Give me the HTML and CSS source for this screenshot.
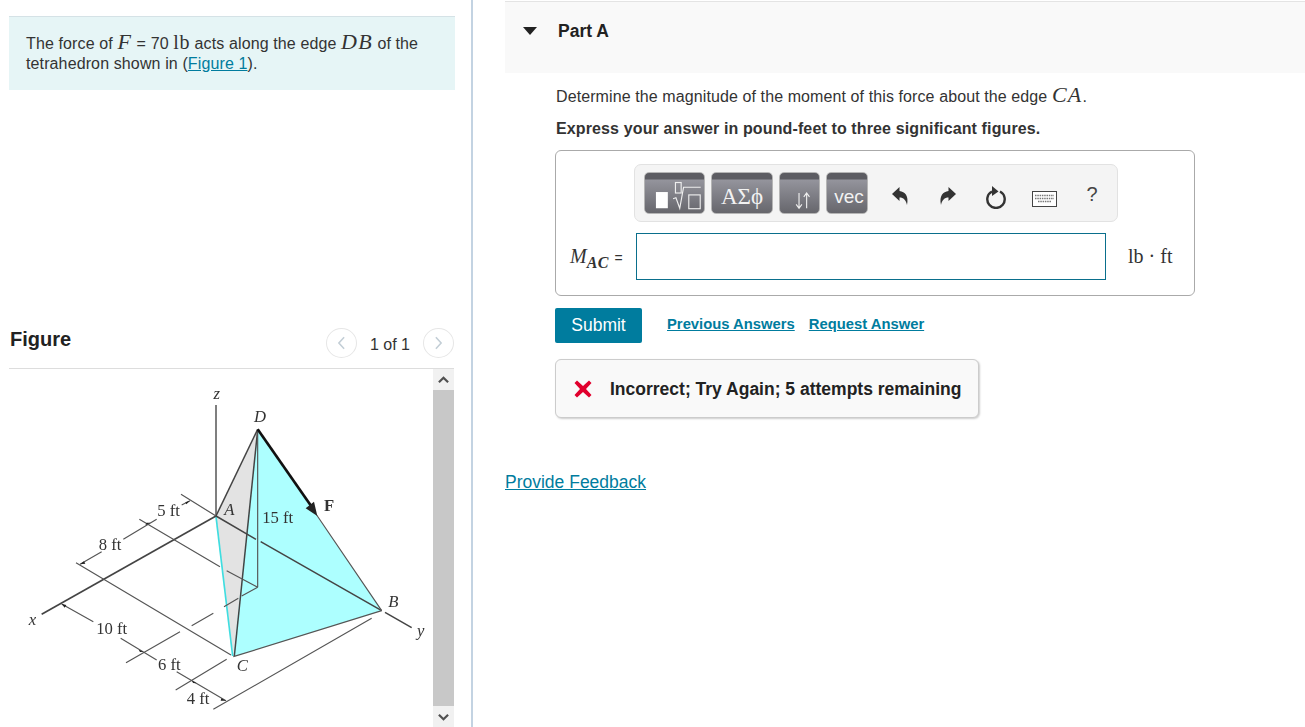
FILE: index.html
```html
<!DOCTYPE html>
<html lang="en">
<head>
<meta charset="utf-8">
<title>Part A</title>
<link rel="stylesheet" href="styles.css">
</head>
<body>
<div class="page">
  <aside class="left">
    <div class="intro">The force of <span class="m">F</span> = 70 <span class="mr">lb</span> acts along the edge <span class="m">DB</span> of the tetrahedron shown in (<a href="#" class="link">Figure 1</a>).</div>
    <div class="fig-head">
      <h2 class="fig-title">Figure</h2>
      <div class="pager">
        <span class="round"><svg viewBox="0 0 10 16" class="chev"><path d="M8 1.500 L2 8 L8 14.500"/></svg></span>
        <span class="count">1 of 1</span>
        <span class="round"><svg viewBox="0 0 10 16" class="chev"><path d="M2 1.500 L8 8 L2 14.500"/></svg></span>
      </div>
    </div>
    <div class="fig-pane">
      <svg class="diagram" viewBox="27 -33 1272 1074">
        <polygon class="f-grey" points="648,408 773,148 700,830"/>
        <polygon class="f-cyan" points="773,148 1145,692 700,830"/>
        <line class="l-cyan" x1="648" y1="410" x2="698" y2="828"/>
        <line class="l-z" x1="648" y1="75" x2="648" y2="408"/>
        <line class="l-mid" x1="648" y1="408" x2="773" y2="148"/>
        <line class="l-mid" x1="773" y1="150" x2="703" y2="828"/>
        <line class="l-th" x1="773" y1="150" x2="773" y2="622"/>
        <line class="l-heavy" x1="125" y1="703" x2="648" y2="408"/>
        <path class="l-mid" d="M648 408 L768 478 M782 485 L1145 692 M1155 697 L1235 743"/>
        <path class="l-th" d="M543 343 L648 408 M418 418 L660 560 M680 572 L773 622 M228 548 L693 825"/>
        <path class="l-th" d="M773 622 L725 648 M715 655 L672 680 M640 700 L575 737 M540 755 L378 848 M680 838 L527 930 M1115 715 L640 988"/>
        <path class="l-th" d="M185 672 L280 725 M362 775 L470 840 M530 875 L678 962 M240 553 L305 515 M370 478 L470 418 M545 375 L570 362"/>
        <path class="l-th" d="M950 405 L1145 692 M700 830 L1145 692"/>
        <path class="l-arrow" d="M773 148 L935 380"/>
        <path class="a-fill" d="M952 408 L917 385 L942 365 Z M185 672 L199 675 L194 683 Z M240 553 L252 544 L256 551 Z M452 428 L436 436 L440 428 Z M570 362 L556 367 L559 373 Z M430 815 L416 809 L420 816 Z M590 910 L576 902 L579 909 Z M678 962 L664 955 L662 962 Z"/>
        <text class="t i" x="780" y="126" text-anchor="middle">D</text>
        <text class="t i" x="650" y="58" text-anchor="middle">z</text>
        <text class="t i" x="688" y="405" text-anchor="middle">A</text>
        <text class="t b" x="987" y="394" text-anchor="middle">F</text>
        <text class="t" x="833" y="430" text-anchor="middle">15 ft</text>
        <text class="t" x="506" y="409" text-anchor="middle">5 ft</text>
        <text class="t" x="330" y="509" text-anchor="middle">8 ft</text>
        <text class="t i" x="97" y="736" text-anchor="middle">x</text>
        <text class="t" x="335" y="763" text-anchor="middle">10 ft</text>
        <text class="t" x="508" y="870" text-anchor="middle">6 ft</text>
        <text class="t" x="594" y="972" text-anchor="middle">4 ft</text>
        <text class="t i" x="727" y="872" text-anchor="middle">C</text>
        <text class="t i" x="1180" y="680" text-anchor="middle">B</text>
        <text class="t i" x="1262" y="769" text-anchor="middle">y</text>
      </svg>
      <div class="scrollbar">
        <span class="sb-btn"><svg viewBox="0 0 12 8" class="sb-chev"><path d="M1 6.500 L6 1.500 L11 6.500"/></svg></span>
        <span class="sb-thumb"></span>
        <span class="sb-btn"><svg viewBox="0 0 12 8" class="sb-chev"><path d="M1 1.500 L6 6.500 L11 1.500"/></svg></span>
      </div>
    </div>
  </aside>
  <main class="right">
    <div class="part-head">
      <svg class="caret" viewBox="0 0 14 8"><path d="M0 0 H14 L7 8 Z"/></svg>
      <h2 class="part-title">Part A</h2>
    </div>
    <div class="part-body">
      <p class="q">Determine the magnitude of the moment of this force about the edge <span class="m">CA</span>.</p>
      <p class="q-b">Express your answer in pound-feet to three significant figures.</p>
      <div class="answer">
        <div class="toolbar">
          <span class="tbtn w1"><svg class="tplate" viewBox="0 0 61 42">
            <rect class="s-fill" x="11" y="20" width="12.500" height="17"/>
            <rect class="s-line" x="31.500" y="10" width="6" height="11"/>
            <path class="s-line" d="M29 27 L32 26 L36 37 L40 15 H58"/>
            <rect class="s-line" x="45.500" y="23" width="12" height="14.500"/>
          </svg></span>
          <span class="tbtn w2"><span class="greek">ΑΣϕ</span></span>
          <span class="tbtn w3"><svg class="tplate" viewBox="0 0 41 42"><path class="s-line" d="M20 21 V37 M17 33 L20 37 L23 33 M28 37 V21 M25 25 L28 21 L31 25"/></svg></span>
          <span class="tbtn w4"><span class="vec">vec</span></span>
          <span class="tool tool-first"><svg class="ico ico-up" viewBox="0 0 18 20"><path d="M1 8 L8.500 1 V5 C14 5.500 18 10 16 19 C15 14 12.500 11.500 8.500 11.500 V15 Z"/></svg></span>
          <span class="tool"><svg class="ico ico-up" viewBox="0 0 18 20"><path d="M17 8 L9.500 1 V5 C4 5.500 0 10 2 19 C3 14 5.500 11.500 9.500 11.500 V15 Z"/></svg></span>
          <span class="tool"><svg class="reload" viewBox="0 0 22 24"><path class="ico-ring" d="M7 6.500 A8.700 8.700 0 1 0 15 6.500"/><path d="M7 1 L13.500 6.500 L7 11 Z"/></svg></span>
          <span class="tool"><svg class="kbd" viewBox="0 0 25 16"><rect x="0.500" y="0.500" width="24" height="15" class="k-frame"/><path class="k-keys" d="M3 4.500 H22 M3 7.500 H22 M6 10.500 H19" /></svg></span>
          <span class="tool help">?</span>
        </div>
        <div class="ans-row">
          <label class="ans-label"><span class="mm">M<sub>AC</sub></span> =</label>
          <input class="ans-input" type="text" aria-label="answer">
          <span class="unit">lb · ft</span>
        </div>
      </div>
      <div class="actions">
        <button class="submit" type="button">Submit</button>
        <a href="#" class="alink first">Previous Answers</a>
        <a href="#" class="alink">Request Answer</a>
      </div>
      <div class="feedback">
        <svg class="xmark" viewBox="0 0 18 18"><path d="M3 0.500 L9 6 L15 0.500 L17.500 3 L12 9 L17.500 15 L15 17.500 L9 12 L3 17.500 L0.500 15 L6 9 L0.500 3 Z"/></svg>
        <span>Incorrect; Try Again; 5 attempts remaining</span>
      </div>
    </div>
    <a href="#" class="provide">Provide Feedback</a>
  </main>
</div>
</body>
</html>
```
FILE: styles.css
```css
* { box-sizing: border-box; }
html, body { margin: 0; padding: 0; height: 100%; overflow: hidden; background: #fff; }
body { font-family: "Liberation Sans", Arial, sans-serif; font-size: 16px; color: #333; }
.page { display: flex; width: 1305px; height: 727px; }

.left { width: 473px; flex: none; padding: 16px 16px 0 9px; border-right: 2px solid #c3d3e2; display: flex; flex-direction: column; }
.intro { background: #e6f5f6; border-top: 1px solid #d5e2e6; height: 74px; padding: 14px 17px 0; line-height: 20px; color: #333; letter-spacing: .12px; }
.link { color: #007c9e; text-decoration: underline; }
.m { font-family: "Liberation Serif", serif; font-style: italic; font-size: 22px; line-height: 1; letter-spacing: 1.200px; color: #333; }
.mr { font-family: "Liberation Serif", serif; font-size: 20px; line-height: 1; letter-spacing: .6px; }

.fig-head { margin-top: 229px; height: 50px; border-bottom: 1px solid #ddd; display: flex; justify-content: space-between; align-items: flex-start; margin-right: 1px; }
.fig-title { margin: 8px 0 0 1px; font-size: 20px; line-height: 24px; font-weight: 700; color: #222; }
.pager { display: flex; align-items: center; margin-top: 9px; margin-right: 0; }
.round { width: 31px; height: 30px; border: 1px solid #e6e6e6; border-radius: 50%; display: flex; align-items: center; justify-content: center; }
.chev { width: 9px; height: 14px; fill: none; stroke: #c3ced6; stroke-width: 1.800; }
.count { width: 66px; text-align: center; font-size: 16px; margin-top: 4px; }

.fig-pane { display: flex; flex: 1; min-height: 0; }
.diagram { width: 424px; height: 358px; flex: none; display: block; filter: blur(0.45px); }
.f-grey { fill: #e3e3e3; }
.f-cyan { fill: #adffff; }
.l-cyan { stroke: #3fdde0; stroke-width: 5; }
.l-z { stroke: #666; stroke-width: 5; fill: none; }
.l-mid { stroke: #444; stroke-width: 4.500; fill: none; }
.l-th { stroke: #555; stroke-width: 3.500; fill: none; }
.l-heavy { stroke: #444; stroke-width: 5; }
.l-arrow { stroke: #111; stroke-width: 8; fill: none; }
.a-fill { fill: #222; }
.t { font-family: "Liberation Serif", serif; font-size: 50px; fill: #333; }
.t.i { font-style: italic; }
.t.b { font-weight: 700; }

.scrollbar { width: 21px; flex: none; display: flex; flex-direction: column; height: 358px; }
.sb-btn { height: 21px; background: #f1f1f1; display: flex; align-items: center; justify-content: center; flex: none; }
.sb-thumb { flex: 1; background: #c8c8c8; }
.sb-chev { width: 11px; height: 8px; fill: none; stroke: #505050; stroke-width: 2.400; }

.right { flex: 1; padding-left: 32px; min-width: 0; }
.part-head { margin-top: 1px; height: 72px; background: #f9f9f9; border-top: 1px solid #e4e4e4; display: flex; align-items: flex-start; padding: 0 0 0 18px; }
.caret { width: 14px; height: 8px; margin-top: 25px; fill: #222; flex: none; }
.part-title { margin: 19px 0 0 21px; font-size: 17.500px; line-height: 20px; font-weight: 700; color: #222; }
.part-body { padding-left: 50px; }
.q { margin: 11px 0 0 1px; line-height: 20px; height: 20px; color: #333; letter-spacing: .1px; }
.q-b { margin: 15px 0 0 1px; line-height: 20px; font-weight: 700; color: #333; letter-spacing: .125px; }

.answer { margin-top: 11px; width: 640px; height: 146px; border: 1px solid #aaa; border-radius: 6px; padding: 13px 0 0; }
.toolbar { margin-left: 78px; width: 484px; height: 58px; background: #f4f4f4; border: 1px solid #e2e2e2; border-radius: 7px; display: flex; align-items: center; padding-left: 9px; gap: 6px; }
.tbtn { height: 42px; flex: none; border: 1px solid #b5b5b5; border-radius: 5px; background: linear-gradient(#5c5c62 0, #5c5c62 6px, #94949c 7px, #66666c 100%); display: flex; align-items: center; justify-content: center; overflow: hidden; color: #f2f2f2; }
.w1 { width: 61px; } .w2 { width: 62px; } .w3 { width: 41px; } .w4 { width: 42px; }
.tplate { width: 100%; height: 100%; display: block; }
.s-fill { fill: #fff; }
.s-line { fill: none; stroke: #eee; stroke-width: 1.200; }
.greek { font-family: "Liberation Serif", serif; font-size: 23px; margin-top: 7px; }
.vec { font-size: 19px; margin-top: 8px; margin-left: 4px; }
.tool { width: 48px; margin-left: -6px; display: flex; align-items: center; justify-content: center; flex: none; }
.tool-first { margin-left: 2px; }
.ico { width: 18px; height: 20px; fill: #333; }
.ico-up { margin-top: 5px; }
.reload { width: 22px; height: 24px; margin-top: 8px; fill: #333; }
.ico-ring { fill: none; stroke: #333; stroke-width: 2.400; }
.kbd { width: 25px; height: 16px; margin-top: 12px; }
.k-frame { fill: #fff; stroke: #444; stroke-width: 1; }
.k-keys { stroke: #777; stroke-width: 1.500; stroke-dasharray: 1.500 0.800; fill: none; }
.help { font-size: 20px; color: #444; margin-top: 3px; }

.ans-row { display: flex; align-items: center; margin-top: 11px; height: 47px; position: relative; }
.ans-label { width: 80px; padding-left: 14px; font-size: 14px; white-space: nowrap; flex: none; }
.mm { font-family: "Liberation Serif", serif; font-style: italic; font-size: 20px; margin-right: 2px; }
.mm sub { font-size: 16px; font-weight: 700; line-height: 0; letter-spacing: .3px; }
.ans-input { width: 470px; height: 47px; flex: none; border: 1px solid #0a6f8c; background: #fff; padding: 0; outline: none; }
.unit { margin-left: 22px; font-family: "Liberation Serif", serif; font-size: 20px; color: #333; }

.actions { margin-top: 12px; display: flex; align-items: flex-start; }
.submit { width: 87px; height: 35px; background: #007c9e; color: #fff; border: 0; border-radius: 2px; font: 17.500px "Liberation Sans", Arial, sans-serif; padding: 0; }
.alink { color: #007c9e; font-weight: 700; font-size: 14.800px; line-height: 18px; margin-top: 7px; margin-left: 14px; text-decoration: underline; white-space: nowrap; }
.alink.first { margin-left: 25px; }

.feedback { margin-top: 16px; width: 424px; height: 59px; background: #f9f9f9; border: 1px solid #ccc; border-radius: 6px; box-shadow: 1px 1px 2px rgba(0,0,0,.2); display: flex; align-items: center; padding: 2px 0 0 18px; gap: 18px; font-weight: 700; font-size: 17.500px; color: #222; white-space: nowrap; }
.xmark { width: 18px; height: 18px; margin-top: -2px; fill: #e1002d; flex: none; }

.provide { display: inline-block; margin-top: 53px; color: #007c9e; font-size: 17.500px; line-height: 22px; text-decoration: underline; }
```
